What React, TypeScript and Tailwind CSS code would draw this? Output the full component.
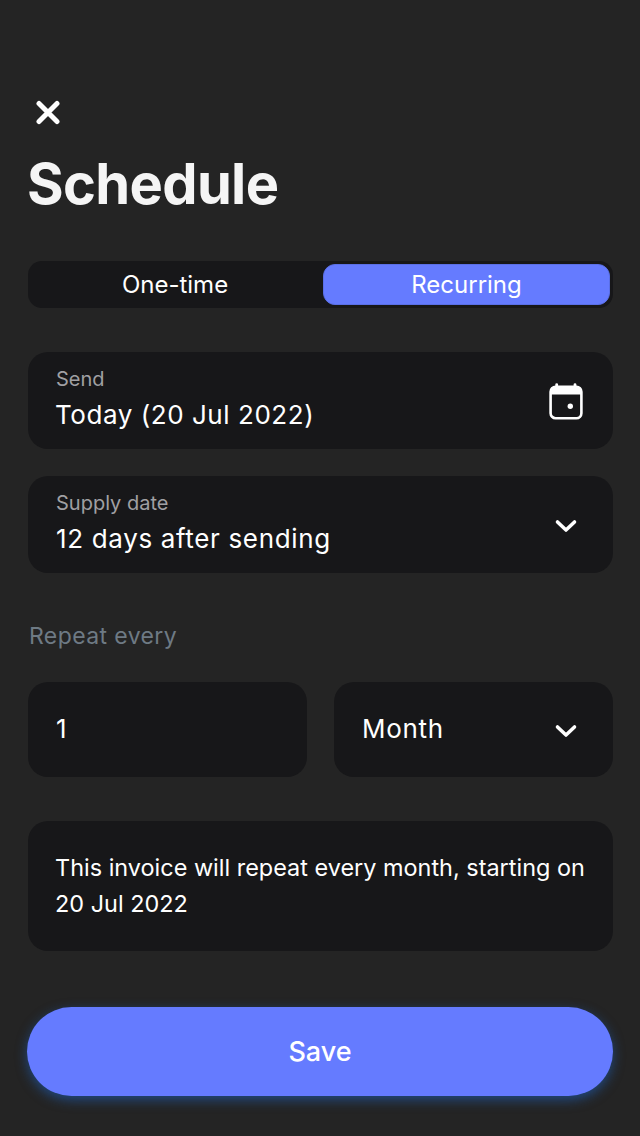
import React from "react";

const Chevron = () => (
  <svg width="24" height="24" viewBox="0 0 24 24" fill="none" stroke="white" strokeWidth="3.6" strokeLinecap="round" strokeLinejoin="round">
    <path d="M3.5 9 L12 17 L20.5 9" />
  </svg>
);

const CalendarIcon = () => (
  <svg width="36" height="38" viewBox="0 0 36 38" fill="none">
    <rect x="2.6" y="4.8" width="30.8" height="31.4" rx="5" stroke="white" strokeWidth="2.6" />
    <path d="M2.6 10 a5 5 0 0 1 5 -5 h20.8 a5 5 0 0 1 5 5 v2.5 h-30.8 z" fill="white" />
    <path d="M8.7 2.6 v3 M27 2.6 v3" stroke="white" strokeWidth="2.8" strokeLinecap="round" />
    <circle cx="22.3" cy="24.2" r="2.7" fill="white" />
  </svg>
);

const App = () => {
  return (
    <div className="w-[640px] h-[1136px] bg-[#242424] pl-7 pr-[27px] pt-[100px] text-white overflow-hidden font-['Inter',sans-serif]">
      <svg width="40" height="26" viewBox="0 0 40 26" fill="none" className="block">
        <path d="M11 3.5 L29 21.5 M29 3.5 L11 21.5" stroke="white" strokeWidth="5" strokeLinecap="round" />
      </svg>

      <h1 className="mt-[24px] -ml-px text-[56px] leading-[68px] font-bold text-[#f5f5f5] tracking-[-0.65px]">Schedule</h1>

      <div className="mt-[43px] h-[47px] rounded-[14px] bg-[#171719] flex p-[3px]">
        <div className="flex-1 pr-[4px] flex items-center justify-center text-[24px]">One-time</div>
        <div className="w-[287px] rounded-[12px] bg-[#657bff] border border-[#5a6fe6] flex items-center justify-center text-[24px]">Recurring</div>
      </div>

      <div className="mt-[44px] h-[97px] rounded-[20px] bg-[#171719] pl-[27px] pr-[29px] flex items-center justify-between">
        <div className="pb-[3px]">
          <div className="ml-px text-[20px] leading-[24px] text-[#a0a0a3]">Send</div>
          <div className="text-[26px] leading-[34px] mt-[7px] tracking-[0.55px]">Today (20 Jul 2022)</div>
        </div>
        <CalendarIcon />
      </div>

      <div className="mt-[27px] h-[97px] rounded-[20px] bg-[#171719] pl-7 pr-[35px] flex items-center justify-between">
        <div className="pb-[3px]">
          <div className="text-[20px] leading-[24px] text-[#a0a0a3]">Supply date</div>
          <div className="text-[26px] leading-[34px] mt-[7px] tracking-[0.65px]">12 days after sending</div>
        </div>
        <Chevron />
      </div>

      <div className="mt-[49px] ml-px text-[23px] leading-[28px] tracking-[0.4px] text-[#6e7a84]">Repeat every</div>

      <div className="mt-[32px] grid grid-cols-2 gap-[27px]">
        <div className="h-[95px] rounded-[20px] bg-[#171719] pl-7 flex items-center text-[26px] tracking-[0.6px]">
          <span className="-mt-[2px]">1</span>
        </div>
        <div className="h-[95px] rounded-[20px] bg-[#171719] pl-7 pr-[35px] flex items-center justify-between text-[26px] tracking-[0.7px]">
          <span className="-mt-[2px]">Month</span>
          <Chevron />
        </div>
      </div>

      <div className="mt-[44px] h-[130px] rounded-[20px] bg-[#171719] pl-[27px] pr-5 flex items-center text-[23.45px] leading-[36px]">
        <p>This invoice will repeat every month, starting on 20 Jul 2022</p>
      </div>

      <button className="mt-[56px] w-[586px] -ml-px h-[89px] pt-[2px] rounded-full bg-[#657bff] text-[27px] font-medium text-white shadow-[0_4px_12px_rgba(30,110,220,0.5)]">
        Save
      </button>
    </div>
  );
};

export default App;
